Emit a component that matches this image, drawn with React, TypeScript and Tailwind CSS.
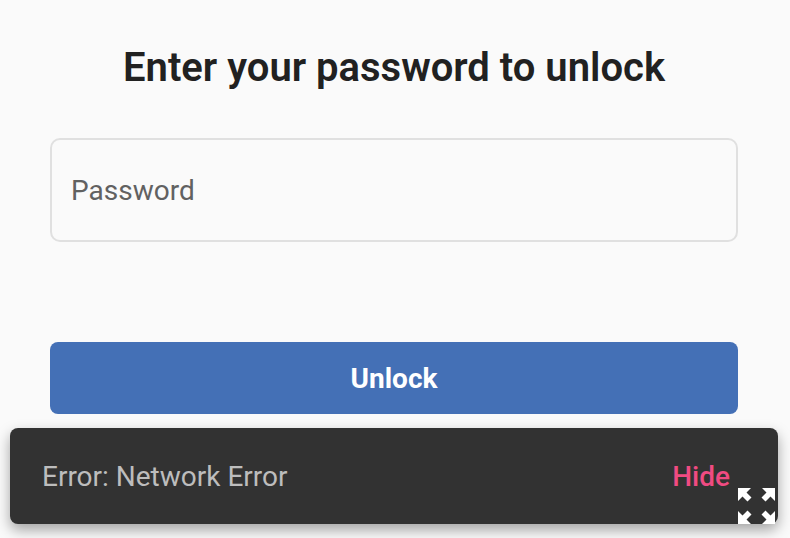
export default function App() {
  return (
    <div className="relative h-[538px] w-[790px] overflow-hidden bg-[#fafafa] font-['Roboto',sans-serif]">
      <div className="flex flex-col pt-[43px] pr-[52px] pl-[50px]">
        <h1 className="pt-[1px] text-center text-[40px] leading-[47px] font-semibold text-[#212121]">
          Enter your password to unlock
        </h1>
        <input
          type="password"
          placeholder="Password"
          className="mt-[47px] h-[104px] rounded-[10px] border-2 border-[#e0e0e0] bg-transparent px-[19px] text-[28px] outline-none placeholder:text-[#616161]"
        />
        <button
          type="button"
          className="mt-[100px] h-[72px] rounded-[8px] bg-[#4470b6] pt-[2px] text-[28px] font-bold text-white"
        >
          Unlock
        </button>
      </div>

      <div className="absolute top-[428px] left-[10px] flex h-[96px] w-[768px] items-center justify-between rounded-[8px] bg-[#323232] pt-[2px] pr-[48px] pl-[32px] shadow-[0_6px_14px_rgba(0,0,0,0.35)]">
        <span className="text-[28px] text-[#bdbdbd]">Error: Network Error</span>
        <button type="button" className="text-[28px] font-medium text-[#f04b82]">
          Hide
        </button>
      </div>

      <svg
        className="absolute top-[488px] left-[738px]"
        width="37"
        height="36"
        viewBox="0 0 37 36"
        fill="#ffffff"
      >
        <path d="M0 0H13L8.5 4.5L13.5 9.5L9.5 13.5L4.5 8.5L0 13Z" />
        <path d="M37 0H24L28.5 4.5L23.5 9.5L27.5 13.5L32.5 8.5L37 13Z" />
        <path d="M0 36V23L4.5 27.5L9.5 22.5L13.5 26.5L8.5 31.5L13 36Z" />
        <path d="M37 36V23L32.5 27.5L27.5 22.5L23.5 26.5L28.5 31.5L24 36Z" />
      </svg>
    </div>
  );
}
